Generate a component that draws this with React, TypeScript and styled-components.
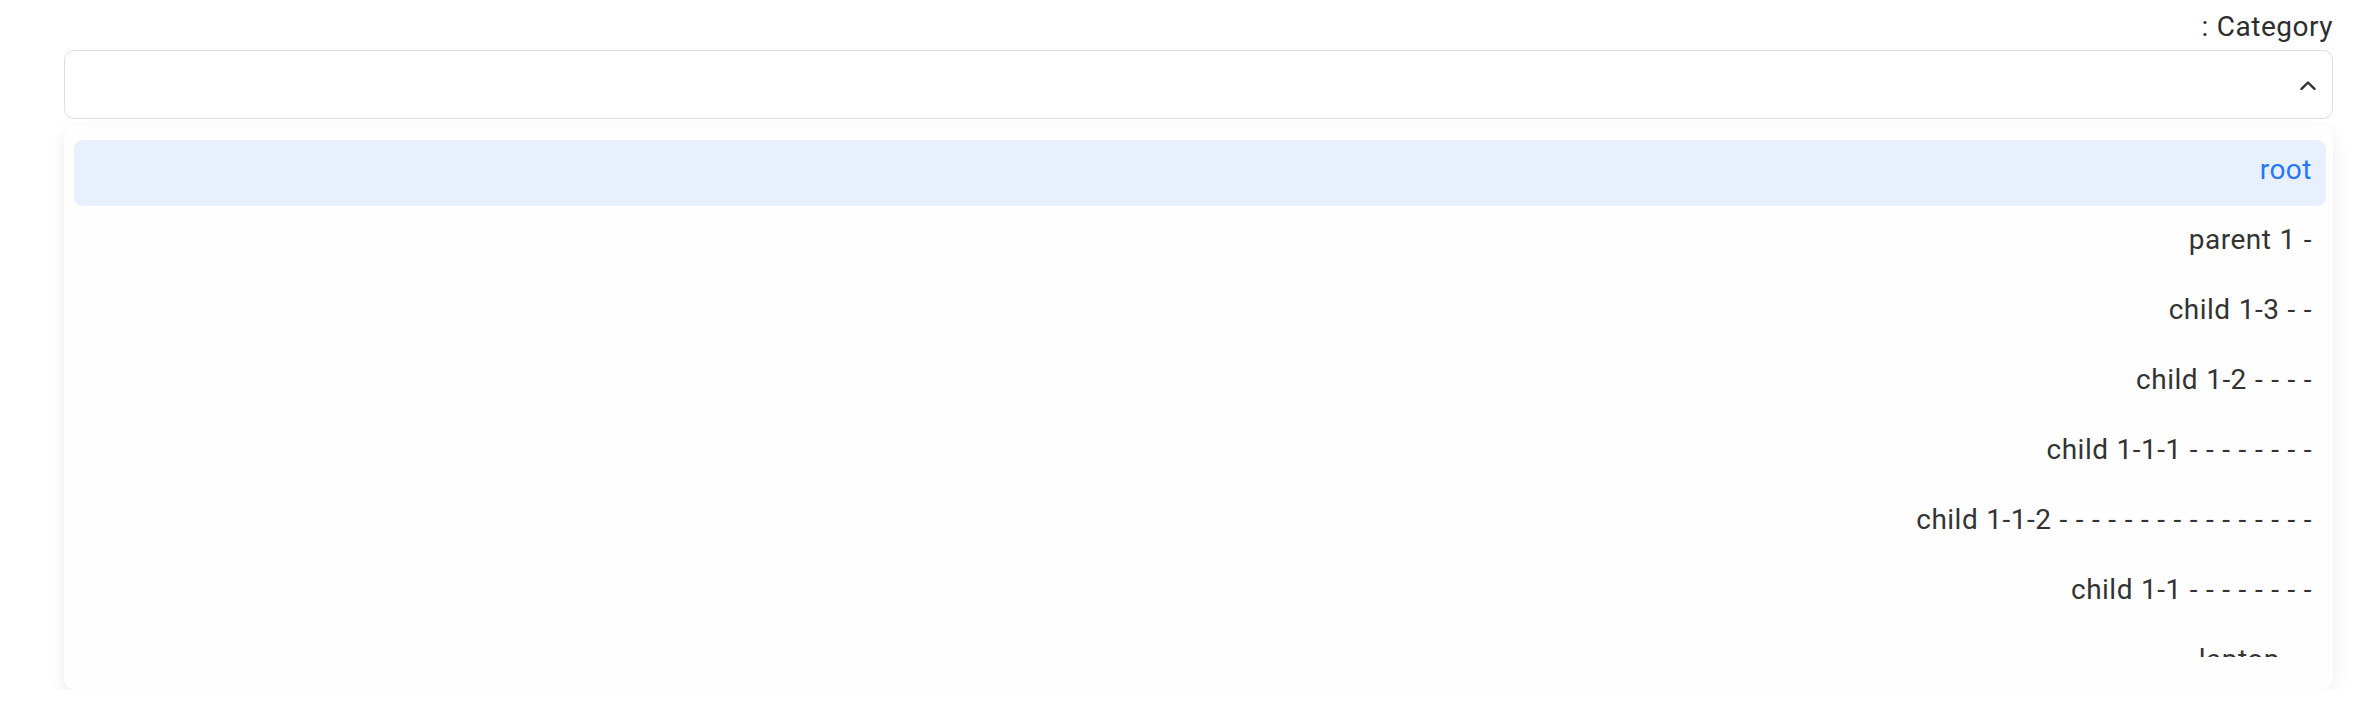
import React from "react";
import styled, { createGlobalStyle } from "styled-components";

const Global = createGlobalStyle`
  html, body { margin: 0; padding: 0; background: #ffffff; }
  body { font-family: Roboto, "Liberation Sans", Arial, sans-serif; }
`;

const Page = styled.div`
  direction: rtl;
  padding: 0 41px 0 64px;
  font-family: Roboto, "Liberation Sans", Arial, sans-serif;
  color: #333333;
`;

const Label = styled.label`
  display: block;
  font-size: 28px;
  letter-spacing: 0.5px;
  word-spacing: 0.6px;
  line-height: 40px;
  padding-top: 7px;
  margin-bottom: 3px;
  color: #2e2e2e;
`;

const Trigger = styled.div`
  box-sizing: border-box;
  height: 69px;
  border: 1.5px solid #dedede;
  border-radius: 10px;
  background: #ffffff;
  display: flex;
  align-items: center;
  justify-content: flex-start;
  padding: 0 16px 0 0;
`;

const Chevron = styled.svg`
  width: 16px;
  height: 9px;
  flex: none;
  margin-top: 2px;
`;

const Dropdown = styled.div`
  box-sizing: border-box;
  margin-top: 6px;
  height: 565px;
  border-radius: 12px;
  background: #fefefe;
  box-shadow: 0 8px 22px rgba(0, 0, 0, 0.06), 0 2px 8px rgba(0, 0, 0, 0.03);
  padding: 15px 7px 33px 10px;
`;

const Viewport = styled.div`
  height: 517px;
  overflow: hidden;
  display: flex;
  flex-direction: column;
  gap: 4px;
`;

const Option = styled.div<{ $active?: boolean; $inset?: number }>`
  flex: none;
  height: 66px;
  box-sizing: border-box;
  line-height: 60px;
  padding: 0 ${(p) => 14 + (p.$inset ?? 0)}px 6px 14px;
  border-radius: 9px;
  font-size: 28px;
  letter-spacing: 0.5px;
  word-spacing: 0.6px;
  white-space: pre;
  color: ${(p) => (p.$active ? "#2577f6" : "#333333")};
  background: ${(p) => (p.$active ? "#e8f0fd" : "transparent")};
`;

const options: { label: string; inset?: number }[] = [
  { label: "root" },
  { label: "- parent 1" },
  { label: "- - child 1-3" },
  { label: "- - - - child 1-2" },
  { label: "- - - - - - - - child 1-1-1" },
  { label: "- - - - - - - - - - - - - - - - child 1-1-2" },
  { label: "- - - - - - - - child 1-1" },
  { label: "laptop", inset: 32 },
];

export default function App() {
  return (
    <>
      <Global />
      <Page>
        <Label>Category :</Label>
        <Trigger>
          <Chevron viewBox="0 0 16 9" fill="none">
            <path
              d="M1.5 7.8 L8 1.5 L14.5 7.8"
              stroke="#333"
              strokeWidth="2.4"
              strokeLinecap="round"
              strokeLinejoin="round"
            />
          </Chevron>
        </Trigger>
        <Dropdown>
          <Viewport>
            {options.map((o, i) => (
              <Option key={i} $active={i === 0} $inset={o.inset}>
                {o.label}
              </Option>
            ))}
          </Viewport>
        </Dropdown>
      </Page>
    </>
  );
}
